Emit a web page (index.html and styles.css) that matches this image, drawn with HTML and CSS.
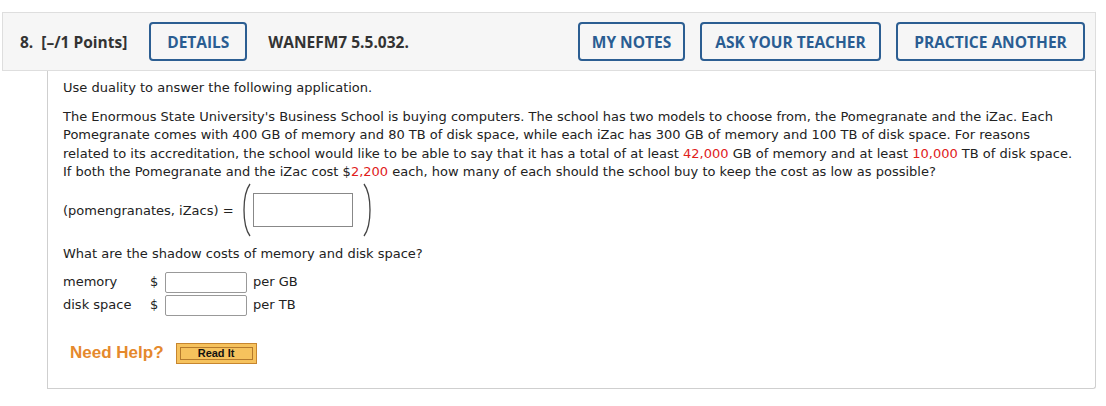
FILE: index.html
```html
<!DOCTYPE html>
<html>
<head>
<meta charset="utf-8">
<link rel="stylesheet" href="styles.css">
</head>
<body>
<div class="question">
  <div class="qhead">
    <span class="qnum">8.</span>
    <span class="qpts">[–/1 Points]</span>
    <button class="hbtn details">DETAILS</button>
    <span class="qcode">WANEFM7 5.5.032.</span>
    <div class="hright">
      <button class="hbtn">MY NOTES</button>
      <button class="hbtn">ASK YOUR TEACHER</button>
      <button class="hbtn">PRACTICE ANOTHER</button>
    </div>
  </div>
  <div class="qbody">
    <p class="p1">Use duality to answer the following application.</p>
    <p class="p2">The Enormous State University's Business School is buying computers. The school has two models to choose from, the Pomegranate and the iZac. Each Pomegranate comes with 400 GB of memory and 80 TB of disk space, while each iZac has 300 GB of memory and 100 TB of disk space. For reasons related to its accreditation, the school would like to be able to say that it has a total of at least <span class="red">42,000</span> GB of memory and at least <span class="red">10,000</span> TB of disk space. If both the Pomegranate and the iZac cost $<span class="red">2,200</span> each, how many of each should the school buy to keep the cost as low as possible?</p>
    <div class="tuple">
      <span class="tlabel">(pomengranates, iZacs) =</span>
      <svg class="paren" width="12" height="54" viewBox="0 0 12 54"><path d="M10 1 C2 12 2 42 10 53" fill="none" stroke="#444" stroke-width="1.3"/></svg>
      <input class="bigin" type="text">
      <svg class="paren right" width="12" height="54" viewBox="0 0 12 54"><path d="M2 1 C10 12 10 42 2 53" fill="none" stroke="#444" stroke-width="1.3"/></svg>
    </div>
    <p class="p3">What are the shadow costs of memory and disk space?</p>
    <div class="costs">
      <span class="lbl">memory</span><span class="dol">$</span><input class="smin" type="text"><span class="unit">per GB</span>
      <span class="lbl">disk space</span><span class="dol">$</span><input class="smin" type="text"><span class="unit">per TB</span>
    </div>
    <div class="help">
      <span class="needhelp">Need Help?</span>
      <span class="readit"><span class="readin">Read It</span></span>
    </div>
  </div>
</div>
</body>
</html>
```
FILE: styles.css
```css
html, body { margin: 0; padding: 0; background: #fff; }
.question { margin: 12px 0 0 2px; width: 1094px; }
.qhead {
  height: 57px;
  background: #f6f6f6;
  border: 1px solid #dedede;
  display: flex;
  align-items: center;
  padding-left: 17px;
  font-family: "Open Sans", sans-serif;
  font-weight: 700;
  color: #333;
  font-size: 15.5px;
}
.qnum { margin-right: 8px; }
.qpts { margin-right: 22px; }
.qcode { margin-left: 21px; }
.hbtn {
  font-family: "Open Sans", sans-serif;
  font-weight: 700;
  font-size: 15.5px;
  color: #2a5d92;
  background: #f6f6f6;
  border: 2px solid #2c5e92;
  border-radius: 4px;
  height: 39px;
  padding: 0;
  margin: 0;
}
.details { width: 98px; }
.hright { margin-left: auto; display: flex; gap: 15px; margin-right: 10px; }
.hright .hbtn:nth-child(1) { width: 107px; }
.hright .hbtn:nth-child(2) { width: 181px; }
.hright .hbtn:nth-child(3) { width: 189px; }
.qbody {
  margin-left: 45px;
  border: 1px solid #cfcfcf;
  border-top: none;
  border-bottom-right-radius: 3px;
  padding: 8px 15px 24px 15px;
  font-family: "DejaVu Sans", Verdana, sans-serif;
  font-size: 13px;
  color: #222;
  line-height: 18.5px;
}
.qbody p { margin: 0; }
.p1 { margin-bottom: 10px !important; }
.red { color: #e0201b; }
.tuple { display: flex; align-items: center; margin-top: 1px; height: 54px; }
.tlabel { padding-top: 4px; }
.paren { margin-left: 6px; margin-right: 1px; }
.paren.right { margin-left: 9px; }
.bigin {
  width: 100px; height: 34px; box-sizing: border-box;
  border: 1px solid #888; margin: 0; padding: 0;
}
.p3 { margin-top: 8px !important; }
.costs {
  display: grid;
  grid-template-columns: 87px 15px 82px auto;
  row-gap: 2px;
  align-items: center;
  margin-top: 9px;
}
.smin {
  width: 82px; height: 21px; box-sizing: border-box;
  border: 1px solid #999; border-radius: 2px; margin: 0; padding: 0;
}
.unit { margin-left: 6px; }
.help { display: flex; align-items: center; margin-top: 27px; padding-left: 7px; }
.needhelp {
  font-family: "Liberation Sans", Arial, sans-serif;
  font-weight: 700; font-size: 17px; color: #e5892d;
}
.readit {
  margin-left: 12px;
  border: 1px solid #c7862f;
  background: #f6c25d;
  padding: 3px;
  display: inline-flex;
}
.readin {
  border: 1px solid #b57a2c;
  width: 71px; height: 11px;
  display: flex; align-items: center; justify-content: center;
  font-family: "Liberation Sans", Arial, sans-serif;
  font-weight: 700; font-size: 11px; color: #111;
}
```
